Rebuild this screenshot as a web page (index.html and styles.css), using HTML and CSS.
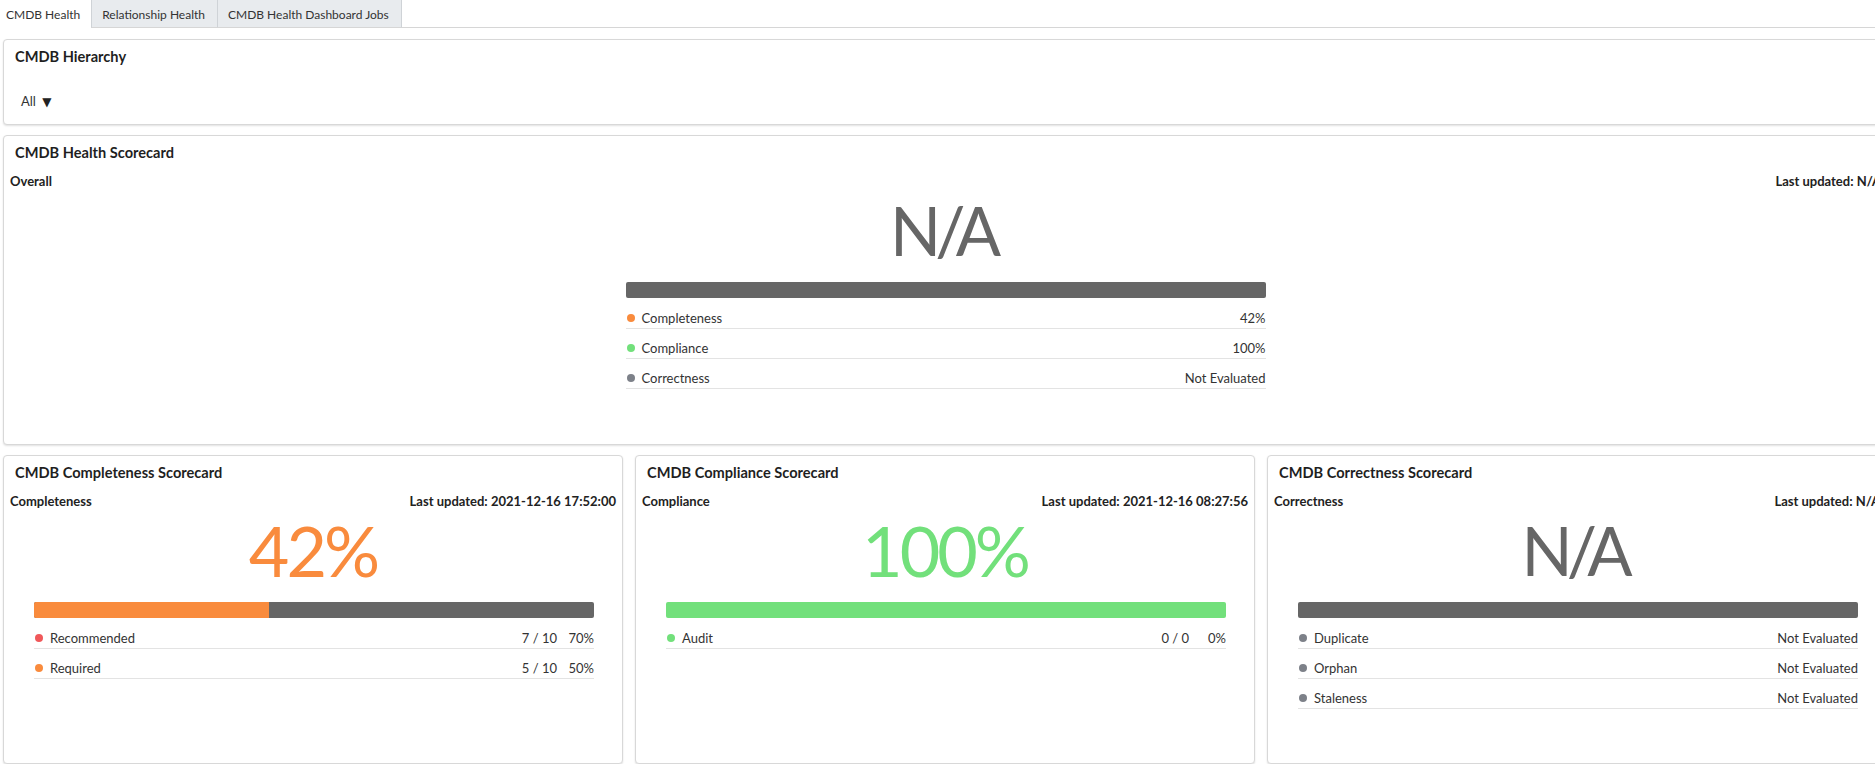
FILE: index.html
```html
<!DOCTYPE html>
<html lang="en">
<head>
<meta charset="utf-8">
<title>CMDB Health</title>
<link rel="stylesheet" href="styles.css">
</head>
<body>
<div class="tabs">
  <div class="tab active first">CMDB Health</div>
  <div class="tab">Relationship Health</div>
  <div class="tab">CMDB Health Dashboard Jobs</div>
  <div class="tab-rest"></div>
</div>

<div class="page">
  <section class="card hierarchy">
    <h2 class="card-title">CMDB Hierarchy</h2>
    <div class="filter">All <span class="caret">&#9660;</span></div>
  </section>

  <section class="card score overall">
    <h2 class="card-title">CMDB Health Scorecard</h2>
    <div class="subhead"><span>Overall</span><span>Last updated: N/A</span></div>
    <div class="center-block">
      <div class="big gray na">N/A</div>
      <div class="bar"><div class="fill fill-gray" style="width:100%"></div></div>
      <ul class="rows">
        <li class="row"><span class="dot orange"></span><span class="label">Completeness</span><span class="val">42%</span></li>
        <li class="row"><span class="dot green"></span><span class="label">Compliance</span><span class="val">100%</span></li>
        <li class="row"><span class="dot gray"></span><span class="label">Correctness</span><span class="val">Not Evaluated</span></li>
      </ul>
    </div>
  </section>

  <div class="cards3">
    <section class="card score small">
      <h2 class="card-title">CMDB Completeness Scorecard</h2>
      <div class="subhead"><span>Completeness</span><span>Last updated: 2021-12-16 17:52:00</span></div>
      <div class="big orange-t">42%</div>
      <div class="bar"><div class="fill fill-orange" style="width:42%"></div></div>
      <ul class="rows">
        <li class="row"><span class="dot red"></span><span class="label">Recommended</span><span class="count">7 / 10</span><span class="pct">70%</span></li>
        <li class="row"><span class="dot orange"></span><span class="label">Required</span><span class="count">5 / 10</span><span class="pct">50%</span></li>
      </ul>
    </section>

    <section class="card score small">
      <h2 class="card-title">CMDB Compliance Scorecard</h2>
      <div class="subhead"><span>Compliance</span><span>Last updated: 2021-12-16 08:27:56</span></div>
      <div class="big green-t">100%</div>
      <div class="bar"><div class="fill fill-green" style="width:100%"></div></div>
      <ul class="rows">
        <li class="row"><span class="dot green"></span><span class="label">Audit</span><span class="count">0 / 0</span><span class="pct">0%</span></li>
      </ul>
    </section>

    <section class="card score small">
      <h2 class="card-title">CMDB Correctness Scorecard</h2>
      <div class="subhead"><span>Correctness</span><span>Last updated: N/A</span></div>
      <div class="big gray na">N/A</div>
      <div class="bar"><div class="fill fill-gray" style="width:100%"></div></div>
      <ul class="rows">
        <li class="row"><span class="dot gray"></span><span class="label">Duplicate</span><span class="val">Not Evaluated</span></li>
        <li class="row"><span class="dot gray"></span><span class="label">Orphan</span><span class="val">Not Evaluated</span></li>
        <li class="row"><span class="dot gray"></span><span class="label">Staleness</span><span class="val">Not Evaluated</span></li>
      </ul>
    </section>
  </div>
</div>
</body>
</html>
```

FILE: styles.css
```css
html {
  overflow: hidden;
}

body {
  margin: 0;
  background: #ffffff;
  font-family: "Lato", "Liberation Sans", sans-serif;
  color: #2b2b2b;
}

.tabs {
  display: flex;
  height: 28px;
  width: 1900px;
}

.tab {
  box-sizing: border-box;
  height: 28px;
  line-height: 29px;
  padding: 0 12px 0 10px;
  font-size: 12px;
  color: #333;
  background: #e8ebee;
  border-left: 1px solid #cfd3d7;
  border-bottom: 1px solid #d6d6d6;
  white-space: nowrap;
}

.tab.active {
  background: #ffffff;
  border-left: none;
  border-bottom: 1px solid transparent;
}

.tab.first {
  padding-left: 6px;
  padding-right: 11px;
}

.tab-rest {
  flex: 1;
  border-left: 1px solid #cfd3d7;
  border-bottom: 1px solid #d6d6d6;
}

.page {
  width: 1885px;
  padding: 11px 0 0 3px;
  display: flex;
  flex-direction: column;
  gap: 10px;
}

.card {
  box-sizing: border-box;
  background: #fff;
  border: 1px solid #d8d8d8;
  border-radius: 4px;
  box-shadow: 0 1px 2px rgba(0, 0, 0, 0.12);
  padding: 0 6px;
}

.card-title {
  margin: 7px 0 0 5px;
  font-size: 14.6px;
  line-height: 20px;
  font-weight: 700;
  color: #1f1f1f;
}

.hierarchy {
  height: 86px;
}

.filter {
  margin: 24px 0 0 11px;
  font-size: 13px;
  line-height: 20px;
  color: #333;
}

.caret {
  font-family: "DejaVu Sans", sans-serif;
  font-size: 12px;
  margin-left: 3px;
  color: #222;
}

.overall {
  height: 310px;
}

.small {
  height: 309px;
}

.subhead {
  display: flex;
  justify-content: space-between;
  margin-top: 9px;
  font-size: 13px;
  line-height: 18px;
  font-weight: 700;
  color: #222;
  white-space: nowrap;
}

.center-block {
  width: 640px;
  margin: 0 auto;
}

.big {
  text-align: center;
  font-size: 70px;
  line-height: 80px;
  font-weight: 400;
  letter-spacing: -3px;
}

.big.na {
  font-size: 67px;
  letter-spacing: -6px;
  text-indent: -6px;
}

.big.gray {
  color: #666666;
}

.orange-t {
  color: #f98b3d;
}

.green-t {
  color: #72e07b;
}

.bar {
  margin-top: 12px;
  height: 16px;
  background: #666666;
  border-radius: 2px;
  overflow: hidden;
}

.small .bar,
.small .rows {
  margin-left: 24px;
  margin-right: 22px;
}

.fill {
  height: 100%;
}

.fill-gray {
  background: #666666;
}

.fill-orange {
  background: #f98b3d;
}

.fill-green {
  background: #72e07b;
}

.rows {
  list-style: none;
  margin: 1px 0 0;
  padding: 0;
}

.row {
  display: flex;
  align-items: center;
  padding: 9px 0 0 1px;
  height: 20px;
  line-height: 20px;
  border-bottom: 1px solid #e3e3e3;
  font-size: 13px;
  color: #333;
}

.dot {
  width: 8px;
  height: 8px;
  border-radius: 50%;
  margin-right: 7px;
  flex: none;
}

.dot.orange {
  background: #f98b3d;
}

.dot.green {
  background: #72e07b;
}

.dot.gray {
  background: #7d8189;
}

.dot.red {
  background: #f0585a;
}

.label {
  flex: 1;
}

.val,
.count {
  text-align: right;
}

.pct {
  width: 37px;
  text-align: right;
}

.cards3 {
  display: grid;
  grid-template-columns: 620px 620px 620px;
  gap: 12px;
}
```
